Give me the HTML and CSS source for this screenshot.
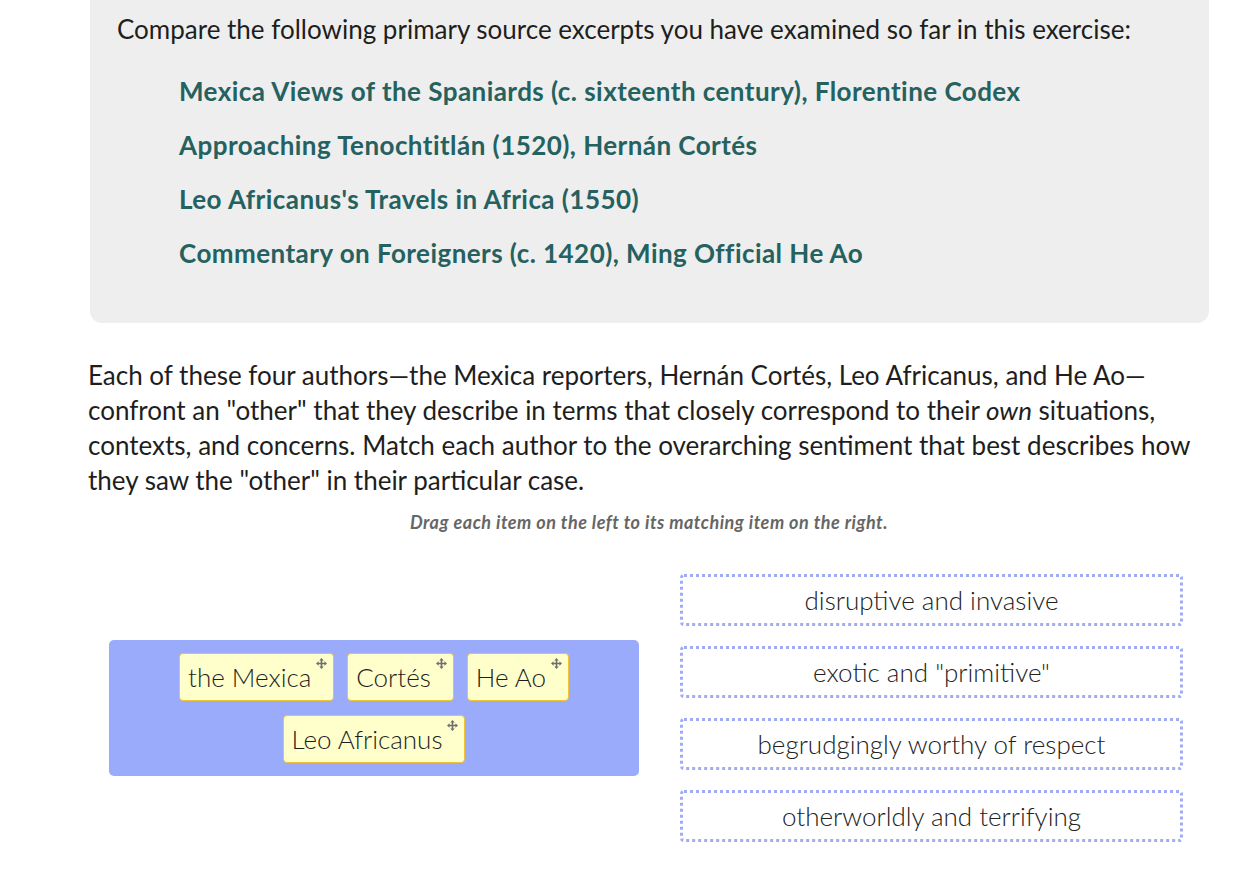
FILE: index.html
```html
<!DOCTYPE html>
<html lang="en">
<head>
    <meta charset="UTF-8">
    <title>Primary Sources</title>
    <link rel="stylesheet" href="styles.css">
</head>
<body>
<div class="page">
    <div class="sources">
        <p class="sources-intro">Compare the following primary source excerpts you have examined so far in this exercise:</p>
        <ul class="sources-list">
            <li><a href="#">Mexica Views of the Spaniards (c. sixteenth century), Florentine Codex</a></li>
            <li><a href="#">Approaching Tenochtitlán (1520), Hernán Cortés</a></li>
            <li><a href="#">Leo Africanus's Travels in Africa (1550)</a></li>
            <li><a href="#">Commentary on Foreigners (c. 1420), Ming Official He Ao</a></li>
        </ul>
    </div>

    <p class="question">Each of these four authors—the Mexica reporters, Hernán Cortés, Leo Africanus, and He Ao—confront an "other" that they describe in terms that closely correspond to their <em>own</em> situations, contexts, and concerns. Match each author to the overarching sentiment that best describes how they saw the "other" in their particular case.</p>

    <p class="hint">Drag each item on the left to its matching item on the right.</p>

    <div class="match">
        <div class="pool">
            <span class="drag">the Mexica<svg class="move" viewBox="0 0 12 12"><path d="M6 0 L8.4 2.8 H6.9 V5.1 H9.2 V3.6 L12 6 L9.2 8.4 V6.9 H6.9 V9.2 H8.4 L6 12 L3.6 9.2 H5.1 V6.9 H2.8 V8.4 L0 6 L2.8 3.6 V5.1 H5.1 V2.8 H3.6 Z"/></svg></span>
            <span class="drag">Cortés<svg class="move" viewBox="0 0 12 12"><path d="M6 0 L8.4 2.8 H6.9 V5.1 H9.2 V3.6 L12 6 L9.2 8.4 V6.9 H6.9 V9.2 H8.4 L6 12 L3.6 9.2 H5.1 V6.9 H2.8 V8.4 L0 6 L2.8 3.6 V5.1 H5.1 V2.8 H3.6 Z"/></svg></span>
            <span class="drag">He Ao<svg class="move" viewBox="0 0 12 12"><path d="M6 0 L8.4 2.8 H6.9 V5.1 H9.2 V3.6 L12 6 L9.2 8.4 V6.9 H6.9 V9.2 H8.4 L6 12 L3.6 9.2 H5.1 V6.9 H2.8 V8.4 L0 6 L2.8 3.6 V5.1 H5.1 V2.8 H3.6 Z"/></svg></span>
            <span class="drag">Leo Africanus<svg class="move" viewBox="0 0 12 12"><path d="M6 0 L8.4 2.8 H6.9 V5.1 H9.2 V3.6 L12 6 L9.2 8.4 V6.9 H6.9 V9.2 H8.4 L6 12 L3.6 9.2 H5.1 V6.9 H2.8 V8.4 L0 6 L2.8 3.6 V5.1 H5.1 V2.8 H3.6 Z"/></svg></span>
        </div>
        <div class="targets">
            <div class="target">disruptive and invasive</div>
            <div class="target">exotic and "primitive"</div>
            <div class="target">begrudgingly worthy of respect</div>
            <div class="target">otherworldly and terrifying</div>
        </div>
    </div>
</div>
</body>
</html>
```

FILE: styles.css
```css
body{
    margin: 0;
    font-family: Lato, "Open Sans", sans-serif;
    color: #1e1e1e;
    background: #fff;
}
.page{
    width: 1122px;
    margin-left: 88px;
}

/* source box */
.sources{
    margin-left: 2px;
    width: 1119px;
    background: #eeeeee;
    border-radius: 0 0 12px 12px;
    padding: 12px 0 52px 27px;
    box-sizing: border-box;
}
.sources-intro{
    margin: 0;
    font-size: 26px;
    line-height: 35px;
}
.sources-list{
    list-style: none;
    margin: 27px 0 0 62px;
    padding: 0;
}
.sources-list li{
    font-size: 26px;
    line-height: 35px;
    margin-bottom: 19px;
}
.sources-list li:last-child{
    margin-bottom: 0;
}
.sources-list a{
    color: #24615f;
    font-weight: bold;
    letter-spacing: 0.45px;
    text-decoration: none;
}

/* question */
.question{
    margin: 35px 0 0;
    font-size: 26px;
    line-height: 35px;
}
.hint{
    margin: 13px 0 0;
    text-align: center;
    font-size: 18px;
    line-height: 22px;
    font-weight: bold;
    font-style: italic;
    letter-spacing: 0.5px;
    color: #666;
}

/* matching */
.match{
    display: flex;
    align-items: center;
    gap: 41px;
    padding: 41px 0 0 21px;
}
.pool{
    width: 530px;
    box-sizing: border-box;
    background: #9aabfb;
    border-radius: 5px;
    padding: 13px 20px;
    display: flex;
    flex-wrap: wrap;
    justify-content: center;
    gap: 14px 13px;
}
.drag{
    position: relative;
    display: block;
    background: #ffffcc;
    border: 1px solid #f2c330;
    border-radius: 4px;
    padding: 5px 22px 5px 8px;
    font-size: 26px;
    font-weight: 300;
    line-height: 36px;
    color: #1e1e1e;
}
.drag .move{
    position: absolute;
    top: 4px;
    right: 6px;
    width: 11px;
    height: 11px;
    fill: #6e6e6e;
}
.targets{
    width: 503px;
    display: flex;
    flex-direction: column;
    gap: 20px;
}
.target{
    height: 52px;
    box-sizing: border-box;
    border: 3px dotted #a0aaf5;
    border-radius: 4px;
    display: flex;
    align-items: center;
    justify-content: center;
    font-size: 26px;
    font-weight: 300;
    color: #222;
}
```
